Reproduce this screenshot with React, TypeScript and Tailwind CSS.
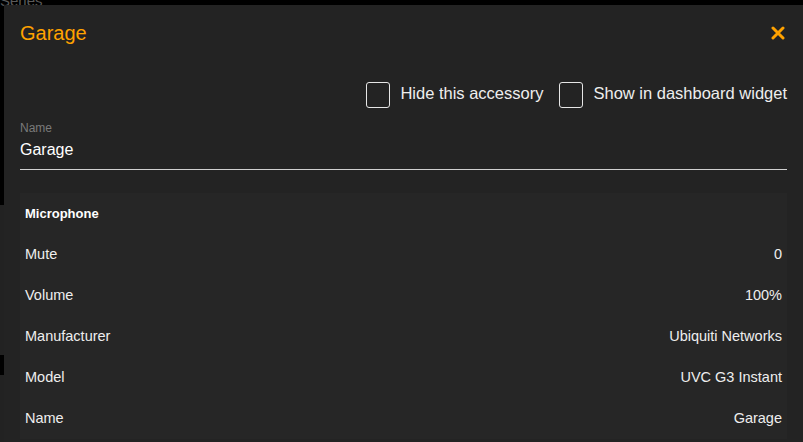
const rows = [
  { label: 'Mute', value: '0' },
  { label: 'Volume', value: '100%' },
  { label: 'Manufacturer', value: 'Ubiquiti Networks' },
  { label: 'Model', value: 'UVC G3 Instant' },
  { label: 'Name', value: 'Garage' },
]

function CheckBox({ label }: { label: string }) {
  return (
    <label className="flex items-center gap-[10px]">
      <span className="h-[26px] w-[24px] rounded-[3px] border border-[#e6e6e6]" />
      <span className="pb-[4px] text-[16.5px] leading-[18px] text-[#eeeeee]">{label}</span>
    </label>
  )
}

export default function App() {
  return (
    <div
      className="relative h-[442px] w-[803px] overflow-hidden bg-black"
      style={{ fontFamily: '"Liberation Sans", Arial, sans-serif' }}
    >
      {/* page behind the dialog */}
      <div className="absolute left-0 top-[-8px] text-[15px] leading-[18px] text-[#5a5a5a]">Series</div>
      <div className="absolute left-0 top-[205px] h-[150px] w-[8px] bg-[#222222]" />
      <div className="absolute left-0 top-[375px] h-[70px] w-[8px] bg-[#222222]" />

      <div className="relative ml-[4px] mt-[5px] flex h-[437px] w-[799px] flex-col bg-[#232323] px-4">
        <div className="flex h-[56px] items-center justify-between">
          <h2 className="text-[20px] text-[#ffa200]">Garage</h2>
          <svg width="14" height="14" viewBox="0 0 14 14" className="mr-[2px]">
            <path d="M2 2 L12 12 M12 2 L2 12" stroke="#ffa200" strokeWidth="3" strokeLinecap="round" />
          </svg>
        </div>

        <div className="mt-[21px] flex justify-end gap-[16px]">
          <CheckBox label="Hide this accessory" />
          <CheckBox label="Show in dashboard widget" />
        </div>

        <div className="mt-[13px] text-[12px] leading-[14px] text-[#7a7a7a]">Name</div>
        <div className="mt-[5px] border-b border-[#d0d0d0] pb-[9px] text-[16px] leading-[20px] text-white">
          Garage
        </div>

        <div className="mt-[23px] flex flex-col bg-[#262626]">
          <div className="flex h-[41px] items-center px-[5px] text-[13px] font-bold text-white">Microphone</div>
          {rows.map((row) => (
            <div key={row.label} className="flex h-[41px] items-center justify-between px-[5px] text-[14.5px] text-[#eeeeee]">
              <span>{row.label}</span>
              <span>{row.value}</span>
            </div>
          ))}
        </div>
      </div>
    </div>
  )
}
